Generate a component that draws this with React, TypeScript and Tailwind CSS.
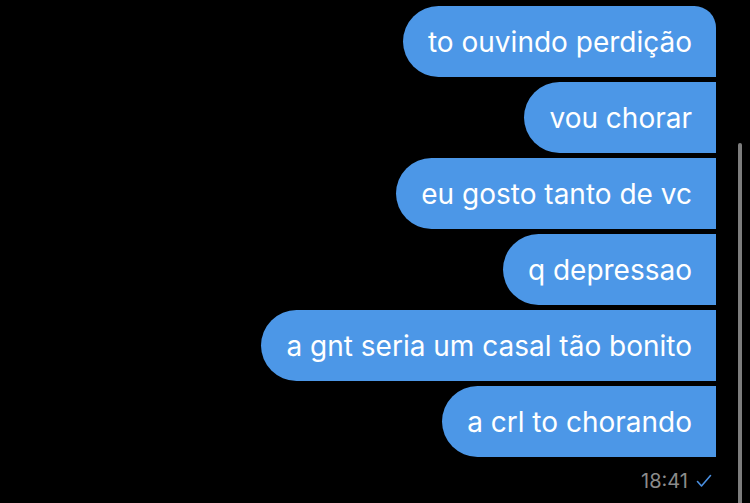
const messages = [
  "to ouvindo perdição",
  "vou chorar",
  "eu gosto tanto de vc",
  "q depressao",
  "a gnt seria um casal tão bonito",
  "a crl to chorando",
];

export default function App() {
  return (
    <div
      className="relative w-[750px] h-[503px] overflow-hidden bg-black"
      style={{ fontFamily: "Inter, 'Noto Sans', sans-serif" }}
    >
      <div className="flex flex-col items-end gap-[5px] pt-[6px] pr-[34px]">
        {messages.map((m, i) => (
          <div
            key={i}
            className={
              i === 0
                ? "h-[71px] flex items-center pl-[25px] pr-[24px] bg-[#4c97e7] text-white text-[28px] rounded-l-[36px] rounded-tr-[22px]"
                : "h-[71px] flex items-center pl-[25px] pr-[24px] bg-[#4c97e7] text-white text-[28px] rounded-l-[36px]"
            }
          >
            {m}
          </div>
        ))}
        <div className="flex items-center gap-[8px] mt-[4px] pr-[4px] text-[20px] text-[#8b8b8b]">
          <span>18:41</span>
          <svg width="16" height="14" viewBox="0 0 16 14" fill="none">
            <path d="M1.5 7.5 L5.5 12 L14.5 1.5" stroke="#4a8fe0" strokeWidth="1.6" strokeLinecap="round" strokeLinejoin="round" />
          </svg>
        </div>
      </div>
      <div className="absolute right-[8px] top-[143px] w-[4px] h-[370px] rounded-full bg-[#7d7d7d]" />
    </div>
  );
}
